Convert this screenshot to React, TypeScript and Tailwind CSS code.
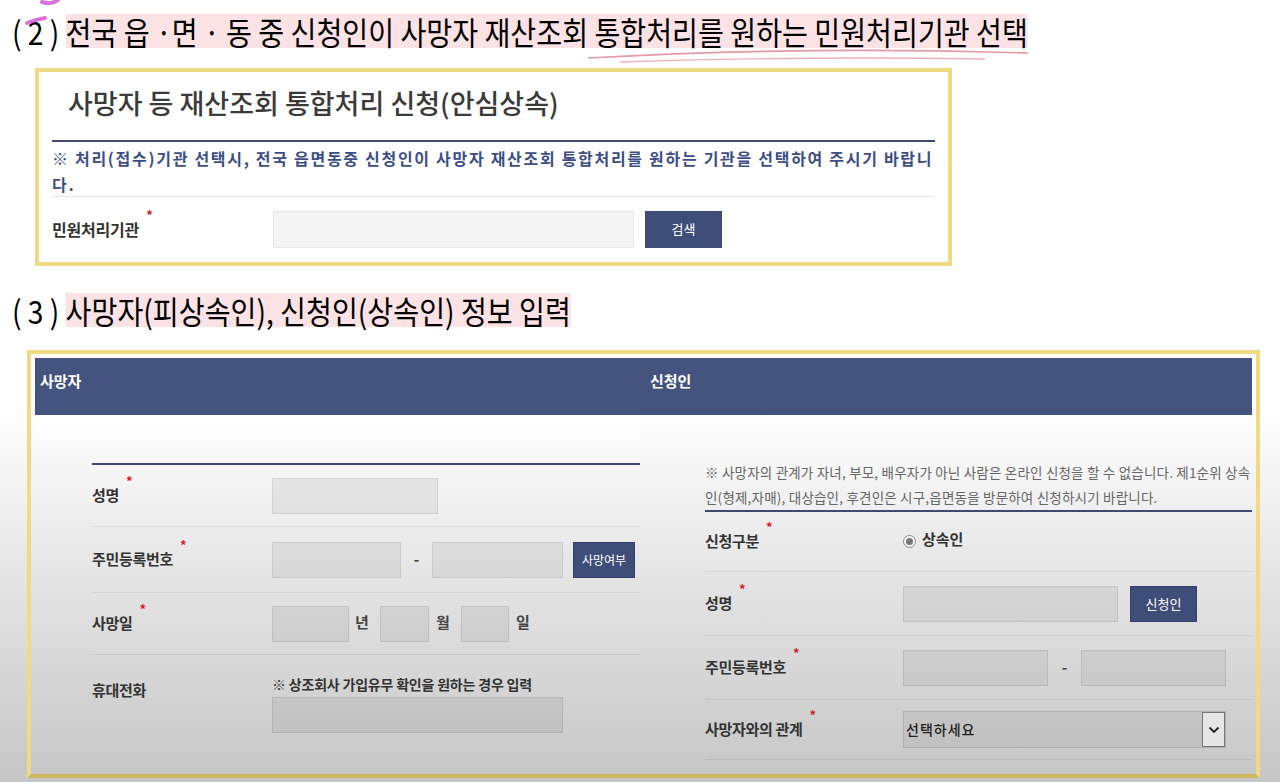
import React from "react";

const Ast = () => (
  <span className="relative -top-[15px] ml-[7px] text-[13px] leading-none font-bold text-[#d0202a]">*</span>
);

const Label = ({ children, w }: { children: React.ReactNode; w: string }) => (
  <div className={`${w} shrink-0 flex items-center text-[15px] font-semibold text-[#333] tracking-[-0.3px]`}>
    {children}
    <Ast />
  </div>
);

const Field = ({ w }: { w: string }) => (
  <div className={`${w} h-[36px] shrink-0 bg-black/[0.055] border border-black/[0.08]`} />
);

const NavyBtn = ({ children, w, size }: { children: React.ReactNode; w: string; size: string }) => (
  <div
    className={`${w} ${size} h-[36px] shrink-0 bg-[#3f4e78] text-white flex items-center justify-center border border-[#33406a]`}
  >
    {children}
  </div>
);

export default function App() {
  return (
    <div className="relative w-[1280px] h-[782px] overflow-hidden bg-linear-to-b from-white from-[52%] to-[#c6c6c6] font-['Noto_Sans_CJK_KR','Noto_Sans',sans-serif] text-[#222]">
      {/* Heading 1 */}
      <div className="pt-[14px] pl-[12px] h-[48px]">
        <div className="origin-left scale-x-[0.88] whitespace-nowrap text-[32px] leading-[34px] text-black">
          <span className="inline-block h-[34px]">( 2 )&nbsp;</span>
          <span className="inline-block h-[34px] bg-[#fbe2e4]">전국 읍 ·면 · 동 중 신청인이 사망자 재산조회 통합처리를 원하는 민원처리기관 선택</span>
        </div>
      </div>

      {/* Box 1 */}
      <div className="mt-[20px] ml-[35px] w-[917px] h-[198px] border-4 border-[#eedb84] bg-white">
        <div className="h-[68px] pt-[15px] pl-[29px] text-[27px] leading-[32px] font-medium text-[#3a3a3a]">
          사망자 등 재산조회 통합처리 신청(안심상속)
        </div>
        <div className="mx-[13px]">
          <div className="h-[2px] bg-[#3e4a6e]" />
          <div className="pt-[3px] h-[55px] border-b border-[#e8e8e8] text-[16px] leading-[26px] font-semibold text-[#3d4e86] tracking-[1.7px] whitespace-nowrap overflow-hidden">
            <div>※ 처리(접수)기관 선택시, 전국 읍면동중 신청인이 사망자 재산조회 통합처리를 원하는 기관을 선택하여 주시기 바랍니</div>
            <div>다.</div>
          </div>
          <div className="h-[64px] flex items-center">
            <div className="w-[221px] shrink-0 flex items-center text-[16px] font-semibold text-[#333] tracking-[-0.2px]">
              민원처리기관
              <Ast />
            </div>
            <div className="w-[361px] h-[37px] bg-[#f4f4f4] border border-[#e6e6e6]" />
            <div className="ml-[11px] w-[77px] h-[37px] bg-[#3f4e78] text-white text-[13px] flex items-center justify-center">
              검색
            </div>
          </div>
        </div>
      </div>

      {/* Heading 2 */}
      <div className="mt-[27px] pl-[12px] h-[34px]">
        <div className="origin-left scale-x-[0.88] whitespace-nowrap text-[32px] leading-[34px] text-black">
          <span className="inline-block h-[34px]">( 3 )&nbsp;</span>
          <span className="inline-block h-[34px] bg-[#fbe2e4]">사망자(피상속인), 신청인(상속인) 정보 입력</span>
        </div>
      </div>

      {/* Box 2 */}
      <div className="mt-[23px] ml-[27px] w-[1233px] h-[428px] border-4 border-[#eedb84] border-b-[#cdb862] p-[4px] flex flex-col">
        <div className="h-[57px] shrink-0 bg-[#44547f] flex text-white text-[15px] font-bold">
          <div className="w-[605px] pt-[12px] pl-[5px] leading-[22px]">사망자</div>
          <div className="flex-1 pt-[12px] pl-[10px] leading-[22px]">신청인</div>
        </div>
        <div className="flex flex-1 min-h-0">
          {/* Left column */}
          <div className="w-[605px] shrink-0">
            <div className="h-[25px] bg-white/50" />
            <div className="pt-[23px] pl-[57px]">
              <div className="h-[2px] bg-[#3e4a6e]" />
              <div className="h-[62px] flex items-center border-b border-black/[0.07]">
                <Label w="w-[180px]">성명</Label>
                <Field w="w-[166px]" />
              </div>
              <div className="h-[66px] flex items-center border-b border-black/[0.07]">
                <Label w="w-[180px]">주민등록번호</Label>
                <Field w="w-[129px]" />
                <div className="w-[31px] text-center text-[15px] font-bold text-[#444]">-</div>
                <Field w="w-[131px]" />
                <div className="ml-[10px]">
                  <NavyBtn w="w-[62px]" size="text-[12px]">사망여부</NavyBtn>
                </div>
              </div>
              <div className="h-[62px] flex items-center border-b border-black/[0.07]">
                <Label w="w-[180px]">사망일</Label>
                <Field w="w-[77px]" />
                <span className="w-[31px] pl-[6px] -mt-[3px] text-[15px] font-semibold text-[#444]">년</span>
                <Field w="w-[49px]" />
                <span className="w-[32px] pl-[7px] -mt-[3px] text-[15px] font-semibold text-[#444]">월</span>
                <Field w="w-[48px]" />
                <span className="pl-[7px] -mt-[3px] text-[15px] font-semibold text-[#444]">일</span>
              </div>
              <div className="flex">
                <div className="w-[180px] pt-[25px] leading-[20px] text-[15px] font-semibold text-[#333] tracking-[-0.3px]">
                  휴대전화
                </div>
                <div className="pt-[20px]">
                  <div className="h-[18px] leading-[18px] text-[14px] font-semibold text-[#333] tracking-[-0.2px]">
                    ※ 상조회사 가입유무 확인을 원하는 경우 입력
                  </div>
                  <div className="mt-[4px]">
                    <Field w="w-[291px]" />
                  </div>
                </div>
              </div>
            </div>
          </div>

          {/* Right column */}
          <div className="flex-1 min-w-0 pl-[65px]">
            <div className="pt-[45px] text-[13.5px] leading-[25px] tracking-[0.2px] text-[#666] whitespace-nowrap overflow-hidden">
              <div>※ 사망자의 관계가 자녀, 부모, 배우자가 아닌 사람은 온라인 신청을 할 수 없습니다. 제1순위 상속</div>
              <div>인(형제,자매), 대상습인, 후견인은 시구,읍면동을 방문하여 신청하시기 바랍니다.</div>
            </div>
            <div className="h-[2px] bg-[#3e4a6e]" />
            <div className="h-[60px] flex items-center border-b border-black/[0.07]">
              <Label w="w-[198px]">신청구분</Label>
              <span className="w-[13px] h-[13px] rounded-full border border-[#888] bg-white/60 flex items-center justify-center">
                <span className="w-[7px] h-[7px] rounded-full bg-[#777]" />
              </span>
              <span className="ml-[6px] -mt-[4px] text-[15px] font-semibold text-[#333]">상속인</span>
            </div>
            <div className="h-[64px] flex items-center border-b border-black/[0.07]">
              <Label w="w-[198px]">성명</Label>
              <Field w="w-[215px]" />
              <div className="ml-[12px]">
                <NavyBtn w="w-[67px]" size="text-[13px]">신청인</NavyBtn>
              </div>
            </div>
            <div className="h-[64px] flex items-center border-b border-black/[0.07]">
              <Label w="w-[198px]">주민등록번호</Label>
              <Field w="w-[145px]" />
              <div className="w-[33px] text-center text-[15px] font-bold text-[#444]">-</div>
              <Field w="w-[145px]" />
            </div>
            <div className="h-[60px] flex items-center border-b border-black/[0.07]">
              <Label w="w-[198px]">사망자와의 관계</Label>
              <div className="w-[323px] h-[37px] border border-black/[0.1] bg-black/[0.05] flex items-center">
                <span className="flex-1 pl-[2px] text-[14px] font-medium text-[#222] tracking-[1px]">선택하세요</span>
                <div className="w-[23px] h-[35px] border border-[#777] bg-[#e6e6e6] flex items-center justify-center">
                  <svg width="12" height="8" viewBox="0 0 12 8">
                    <path d="M1.5 1.5 L6 6 L10.5 1.5" fill="none" stroke="#222" strokeWidth="1.8" />
                  </svg>
                </div>
              </div>
            </div>
          </div>
        </div>
      </div>

      {/* Annotation marks */}
      <svg className="absolute left-0 top-0 pointer-events-none" width="1280" height="70">
        <path d="M27 23 C 32 21, 38 19, 45 18" fill="none" stroke="#d45bd2" strokeWidth="4" strokeLinecap="round" opacity="0.85" />
        <path d="M42 2 C 48 4, 54 3, 58 0" fill="none" stroke="#d45bd2" strokeWidth="4" strokeLinecap="round" opacity="0.85" />
        <path d="M588 58 Q 800 46 1028 53" fill="none" stroke="#e59aa4" strokeWidth="1.6" />
        <path d="M620 62 Q 800 56 985 59" fill="none" stroke="#eeb3ba" strokeWidth="1.4" />
      </svg>
    </div>
  );
}
